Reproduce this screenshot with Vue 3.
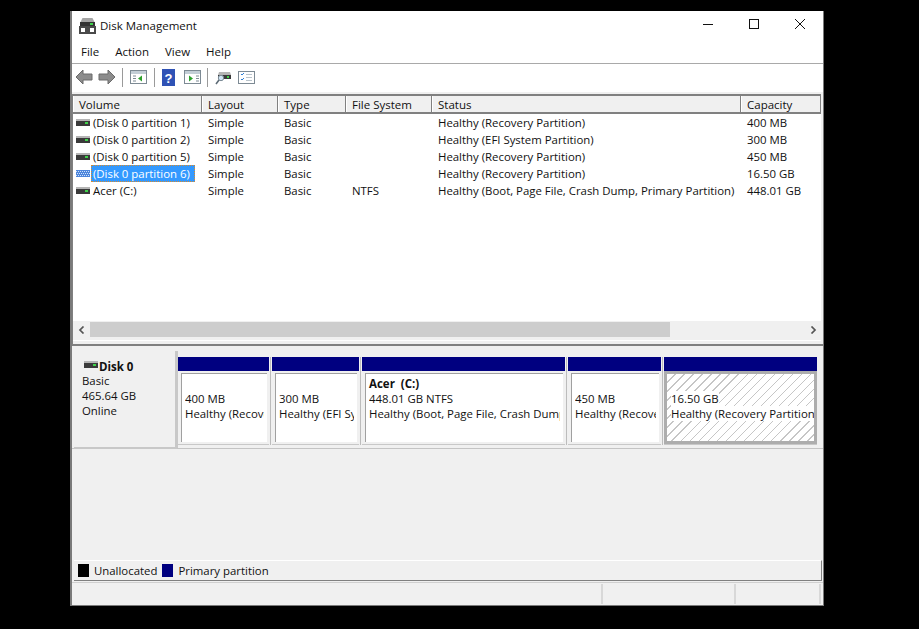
<script setup>
const columns = [
  { label: 'Volume', width: 129 },
  { label: 'Layout', width: 76 },
  { label: 'Type', width: 68 },
  { label: 'File System', width: 86 },
  { label: 'Status', width: 309 },
  { label: 'Capacity', width: 80 }
]
const rows = [
  { name: '(Disk 0 partition 1)', type: 'Basic', fs: '', status: 'Healthy (Recovery Partition)', cap: '400 MB' },
  { name: '(Disk 0 partition 2)', type: 'Basic', fs: '', status: 'Healthy (EFI System Partition)', cap: '300 MB' },
  { name: '(Disk 0 partition 5)', type: 'Basic', fs: '', status: 'Healthy (Recovery Partition)', cap: '450 MB' },
  { name: '(Disk 0 partition 6)', type: 'Basic', fs: '', status: 'Healthy (Recovery Partition)', cap: '16.50 GB', selected: true },
  { name: 'Acer (C:)', type: 'Basic', fs: 'NTFS', status: 'Healthy (Boot, Page File, Crash Dump, Primary Partition)', cap: '448.01 GB', plain: true }
]
const partitions = [
  { width: 91, size: '400 MB', status: 'Healthy (Recovery Partition)' },
  { width: 87, size: '300 MB', status: 'Healthy (EFI System Partition)' },
  { width: 203, title: 'Acer  (C:)', size: '448.01 GB NTFS', status: 'Healthy (Boot, Page File, Crash Dump, Primary Partition)' },
  { width: 93, size: '450 MB', status: 'Healthy (Recovery Partition)' },
  { width: 153, size: '16.50 GB', status: 'Healthy (Recovery Partition)', hatched: true }
]
const menus = ['File', 'Action', 'View', 'Help']
</script>

<template>
  <div class="screen">
    <div class="window">
      <header class="titlebar">
        <svg class="app-icon" width="17" height="16" viewBox="0 0 17 16">
          <path d="M3.500 0h10l2 4h-14z" fill="#a5a5a5" />
          <rect x="1" y="4" width="15" height="4" fill="#333" />
          <rect x="11" y="5" width="3" height="2" fill="#3fd24a" />
          <rect x="0" y="8" width="17" height="8" fill="#4a4a4a" />
          <rect x="2" y="10" width="4" height="4" fill="#fff" />
          <rect x="11" y="10" width="4" height="4" fill="#fff" />
        </svg>
        <span class="title">Disk Management</span>
        <div class="caption-buttons">
          <svg width="12" height="12" viewBox="0 0 12 12"><path d="M1 6.500h10" stroke="#111" fill="none" /></svg>
          <svg width="12" height="12" viewBox="0 0 12 12"><rect x="1.500" y="1.500" width="9" height="9" stroke="#111" fill="none" /></svg>
          <svg width="12" height="12" viewBox="0 0 12 12"><path d="M1 1l10 10M11 1L1 11" stroke="#111" fill="none" /></svg>
        </div>
      </header>

      <nav class="menubar">
        <span v-for="m in menus" :key="m" class="menu-item">{{ m }}</span>
      </nav>

      <div class="toolbar">
        <svg width="18" height="16" viewBox="0 0 18 16"><path d="M1 8l7-7v4h9v6H8v4z" fill="#8c8c8c" stroke="#6a6a6a" /></svg>
        <svg class="tb-next" width="18" height="16" viewBox="0 0 18 16"><path d="M17 8l-7-7v4H1v6h9v4z" fill="#8c8c8c" stroke="#6a6a6a" /></svg>
        <i class="tb-sep first"></i>
        <svg class="tb-console" width="17" height="14" viewBox="0 0 17 14">
          <rect x=".5" y=".5" width="16" height="13" fill="#fff" stroke="#7d8a94" />
          <rect x="1" y="1" width="15" height="3" fill="#c3ced6" />
          <path d="M3 6h3M3 8.500h3M3 11h3" stroke="#7d8a94" />
          <path d="M12 5.500v6l-4-3z" fill="#2ca02c" />
        </svg>
        <i class="tb-sep second"></i>
        <svg class="tb-help" width="13" height="17" viewBox="0 0 13 17">
          <rect width="13" height="17" fill="#2f52b5" />
          <text x="6.500" y="13.500" text-anchor="middle" class="help-mark">?</text>
        </svg>
        <svg class="tb-console2" width="17" height="14" viewBox="0 0 17 14">
          <rect x=".5" y=".5" width="16" height="13" fill="#fff" stroke="#7d8a94" />
          <rect x="1" y="1" width="15" height="3" fill="#c3ced6" />
          <path d="M12 6h3M12 8.500h3M12 11h3" stroke="#7d8a94" />
          <path d="M5 5.500v6l4-3z" fill="#2ca02c" />
        </svg>
        <i class="tb-sep third"></i>
        <svg class="tb-rescan" width="17" height="15" viewBox="0 0 17 15">
          <path d="M4 2h11l1 3H3z" fill="#b5b5b5" />
          <rect x="3" y="5" width="13" height="4" fill="#3a3a3a" />
          <rect x="12" y="6" width="2" height="2" fill="#3fd24a" />
          <circle cx="6" cy="8" r="2.700" fill="#cfe4f2" stroke="#7c8b96" />
          <path d="M4 10l-3 4" stroke="#5c6a75" stroke-width="1.500" />
        </svg>
        <svg class="tb-list" width="17" height="13" viewBox="0 0 17 13">
          <rect x=".5" y=".5" width="16" height="12" fill="#fff" stroke="#7d8a94" />
          <path d="M3 3l1 1 2-2M3 8l1 1 2-2" stroke="#2f7fd6" fill="none" />
          <path d="M8 3.500h6M8 6.500h6M8 9.500h6" stroke="#b9c3ca" />
        </svg>
      </div>

      <div class="gap-band"></div>

      <section class="list-pane">
        <div class="header-row">
          <div v-for="c in columns" :key="c.label" class="header-cell" :style="{ width: c.width + 'px' }">{{ c.label }}</div>
        </div>
        <div class="rows">
          <div v-for="r in rows" :key="r.name" class="row">
            <div class="cell volume" :style="{ width: columns[0].width + 'px' }">
              <svg class="drive" width="14" height="7" viewBox="0 0 14 7">
                <template v-if="r.selected">
                  <rect width="14" height="7" fill="#4d86dc" />
                  <path d="M0 1.500h14M1 3.500h13M0 5.500h14" stroke="#cfe2fb" stroke-dasharray="1 1" />
                </template>
                <template v-else>
                  <rect y="0" width="14" height="2" fill="#b5b5b5" />
                  <rect y="2" width="14" height="5" fill="#3a3a3a" />
                  <rect x="9" y="3" width="3" height="2" fill="#3fd24a" />
                </template>
              </svg>
              <span class="vol-name" :class="{ selected: r.selected }">{{ r.name }}</span>
            </div>
            <div class="cell" :style="{ width: columns[1].width + 'px' }">Simple</div>
            <div class="cell" :style="{ width: columns[2].width + 'px' }">{{ r.type }}</div>
            <div class="cell" :style="{ width: columns[3].width + 'px' }">{{ r.fs }}</div>
            <div class="cell" :style="{ width: columns[4].width + 'px' }">{{ r.status }}</div>
            <div class="cell" :style="{ width: columns[5].width + 'px' }">{{ r.cap }}</div>
          </div>
        </div>
        <div class="scrollbar">
          <svg class="arrow" width="7" height="8" viewBox="0 0 7 8"><path d="M5.500 .5L2 4l3.500 3.500" stroke="#555" stroke-width="1.700" fill="none" /></svg>
          <div class="track"><div class="thumb"></div></div>
          <svg class="arrow" width="7" height="8" viewBox="0 0 7 8"><path d="M1.500 .5L5 4 1.500 7.500" stroke="#555" stroke-width="1.700" fill="none" /></svg>
        </div>
        <div class="scroll-rule"></div>
      </section>

      <section class="graph-pane">
        <div class="disk-row">
          <div class="disk-label">
            <div class="disk-name">
              <svg width="14" height="7" viewBox="0 0 14 7">
                <rect width="14" height="2" fill="#b5b5b5" />
                <rect y="2" width="14" height="5" fill="#3a3a3a" />
                <rect x="9" y="3" width="3" height="2" fill="#3fd24a" />
              </svg>
              <b>Disk 0</b>
            </div>
            <div>Basic</div>
            <div>465.64 GB</div>
            <div>Online</div>
          </div>
          <div class="partitions">
            <div v-for="p in partitions" :key="p.size" class="partition" :style="{ width: p.width + 'px' }">
              <div class="part-bar"></div>
              <div class="part-body" :class="{ hatched: p.hatched }">
                <b class="part-title">{{ p.title }}</b>
                <div class="part-text"><span>{{ p.size }}</span></div>
                <div class="part-text"><span>{{ p.status }}</span></div>
              </div>
            </div>
          </div>
        </div>
        <div class="graph-empty"></div>
        <div class="legend">
          <i class="swatch black"></i><span class="legend-text">Unallocated</span>
          <i class="swatch navy"></i><span>Primary partition</span>
        </div>
      </section>

      <footer class="statusbar">
        <div class="status-main"></div>
        <div class="status-a"></div>
        <div class="status-b"></div>
        <div class="status-c"></div>
      </footer>
    </div>
  </div>
</template>

<style>
html, body { margin: 0; background: #000; }
</style>

<style scoped>
.screen {
  width: 919px;
  height: 629px;
  background: #000;
  padding: 11px 0 0 70px;
  box-sizing: border-box;
  overflow: hidden;
  font-family: "Open Sans", "Noto Sans", sans-serif;
  font-size: 11.4px;
  color: #111;
}
.window {
  width: 754px;
  height: 595px;
  box-sizing: border-box;
  border: 1px solid #7a7a7a;
  border-left-width: 2px;
  border-top: 0;
  background: #f0f0f0;
  display: flex;
  flex-direction: column;
}
.titlebar {
  height: 29px;
  background: #fff;
  display: flex;
  align-items: center;
  padding-left: 7px;
  flex: none;
}
.title { margin-left: 4px; font-size: 11.5px; }
.caption-buttons {
  margin-left: auto;
  display: flex;
  gap: 34px;
  padding-right: 17px;
  margin-top: -3px;
}
.menubar {
  height: 23px;
  background: #fff;
  display: flex;
  align-items: center;
  gap: 16px;
  padding-left: 9px;
  flex: none;
  box-sizing: border-box;
  font-size: 11.5px;
}
.toolbar {
  height: 29px;
  background: #fff;
  border-top: 1px solid #a9a9a9;
  box-sizing: border-box;
  display: flex;
  align-items: center;
  padding: 0 0 2px 3px;
  flex: none;
}
.tb-next { margin-left: 5px; }
.tb-sep { width: 1px; height: 19px; background: #9a9a9a; }
.tb-sep.first { margin-left: 6px; }
.tb-console { margin-left: 7px; }
.tb-sep.second { margin-left: 7px; }
.tb-help { margin-left: 7px; }
.tb-console2 { margin-left: 9px; }
.tb-sep.third { margin-left: 6px; }
.tb-rescan { margin-left: 7px; }
.tb-list { margin-left: 6px; }
.help-mark { font: bold 13px "Liberation Sans", sans-serif; fill: #fff; }
.gap-band { height: 2px; background: #f0f0f0; flex: none; }
.list-pane {
  height: 250px;
  margin-right: 2px;
  background: #f0f0f0;
  border-top: 2px solid #808080;
  border-left: 1px solid #808080;
  box-sizing: border-box;
  display: flex;
  flex-direction: column;
  flex: none;
}
.header-row {
  display: flex;
  height: 16px;
  background: #f0f0f0;
  border-bottom: 2px solid #808080;
  box-sizing: content-box;
  flex: none;
}
.header-cell {
  box-sizing: border-box;
  padding-left: 6px;
  border-right: 1px solid #808080;
  box-shadow: inset 1px 0 0 #fff;
  white-space: nowrap;
  font-size: 11.5px;
  line-height: 17px;
}
.rows { flex: 1; background: #fff; }
.row { display: flex; height: 17px; line-height: 17px; }
.cell {
  box-sizing: border-box;
  padding-left: 6px;
  white-space: nowrap;
  flex: none;
}
.volume {
  display: flex;
  align-items: center;
  padding-left: 3px;
}
.drive { flex: none; margin-right: 3px; }
.vol-name.selected {
  background: #3399ff;
  color: #fff;
  outline: 1px dotted #d98a2b;
  outline-offset: -1px;
  width: 104px;
  margin-left: -2px;
  padding-left: 2px;
  box-sizing: border-box;
  height: 17px;
}
.scrollbar {
  height: 17px;
  display: flex;
  align-items: center;
  flex: none;
}
.scroll-rule {
  height: 1px;
  background: #fff;
  margin: 2px 0 3px;
  flex: none;
}
.arrow { flex: none; margin: 0 5px; }
.arrow:last-child { margin: 0 4px 0 5px; }
.track { flex: 1; height: 15px; }
.thumb { width: 580px; height: 15px; background: #cdcdcd; }
.graph-pane {
  flex: 1;
  display: flex;
  flex-direction: column;
  border-top: 2px solid #808080;
  padding-top: 5px;
  min-height: 0;
  background: #f0f0f0;
}
.disk-row {
  display: flex;
  height: 97px;
  flex: none;
  padding-left: 2px;
  border-bottom: 1px solid #c4c4c4;
  box-sizing: content-box;
}
.disk-label {
  width: 103px;
  height: 98px;
  box-sizing: border-box;
  border-right: 2px solid #c8c8c8;
  border-bottom: 2px solid #c8c8c8;
  background: #f0f0f0;
  padding: 8px 0 0 8px;
  line-height: 15px;
  flex: none;
}
.disk-name {
  display: flex;
  align-items: center;
  gap: 1px;
  font-size: 11.5px;
  margin-left: 2px;
  height: 14px;
}
.disk-name svg { margin-top: -4px; }
.partitions {
  display: flex;
  gap: 3px;
  padding-top: 6px;
  border-left: 1px solid #c8c8c8;
}
.partition {
  flex: none;
  display: flex;
  flex-direction: column;
  height: 88px;
  border-bottom: 1px solid #c8c8c8;
  box-shadow: 1px 0 0 #f0f0f0, 2px 0 0 #bcbcbc;
  box-sizing: border-box;
}
.partition:last-child { box-shadow: none; }
.part-bar { height: 14px; background: #000080; flex: none; }
.part-body {
  margin: 2px 2px 0 3px;
  height: 69px;
  flex: none;
  background: #fff;
  border: 1px solid #a0a0a0;
  border-width: 1px 0 0 1px;
  box-sizing: border-box;
  padding: 2px 3px 0;
  overflow: hidden;
  display: flex;
  flex-direction: column;
  line-height: 15px;
  white-space: nowrap;
}
.part-title { font-size: 11.5px; display: block; height: 15px; white-space: pre; flex: none; }
.part-text { overflow: hidden; flex: none; }
.part-body.hatched {
  margin: 0;
  height: 73px;
  border: 3px solid #adadad;
  padding: 2px 0 0 4px;
  background: repeating-linear-gradient(135deg, #fff 0 5.400px, #c6c6c6 5.400px 6.400px);
}
.hatched .part-text span { background: #fff; }
.graph-empty { flex: 1; }
.legend {
  height: 19px;
  margin: 0 1px 0 2px;
  background: #f0f0f0;
  border-top: 1px solid #fff;
  border-right: 1px solid #808080;
  border-bottom: 1px solid #808080;
  display: flex;
  align-items: center;
  padding-left: 4px;
  box-sizing: content-box;
  flex: none;
}
.swatch { width: 11px; height: 13px; flex: none; margin-right: 5px; }
.swatch.black { background: #000; }
.swatch.navy { background: #000080; }
.legend-text { margin-right: 5px; }
.statusbar {
  height: 23px;
  display: flex;
  border-top: 1px solid #d0d0d0;
  margin-top: 1px;
  box-sizing: border-box;
  padding: 1px 0 1px 0;
  flex: none;
}
.status-main { width: 531px; border-right: 2px solid #d8d8d8; box-sizing: border-box; }
.status-a { width: 133px; border-right: 2px solid #d8d8d8; box-sizing: border-box; }
.status-b { width: 85px; border-right: 2px solid #d8d8d8; box-sizing: border-box; }
.status-c { flex: 1; }
</style>
